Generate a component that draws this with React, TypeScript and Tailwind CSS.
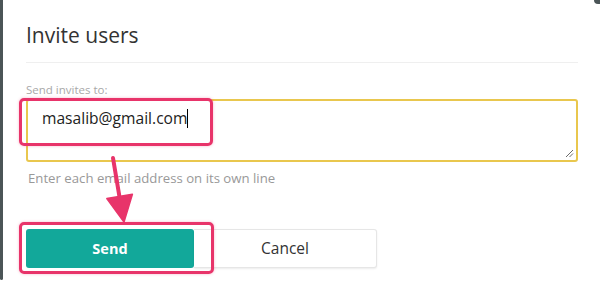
import React from "react";

const FONT = { fontFamily: '"Open Sans", "Noto Sans", Arial, sans-serif' };

function Grip() {
  return (
    <svg width="9" height="9" viewBox="0 0 9 9" className="absolute right-[2px] bottom-[2px]">
      <path d="M1 8 L8 1 M4.5 8 L8 4.5" stroke="#6b6b6b" strokeWidth="1" />
    </svg>
  );
}

export default function App() {
  return (
    <div className="relative w-[600px] h-[290px] bg-white overflow-hidden flex" style={FONT}>
      {/* backdrop edge */}
      <div className="w-[3px] h-[280px] bg-[#4b5557] rounded-b-sm shrink-0" />

      {/* dialog */}
      <div className="flex-1 bg-white rounded-tl-[7px] rounded-tr-[5px] pl-[23px] pr-[22px] pt-[21px]">
        <h1 className="text-[21px] leading-[29px] text-[#333] font-normal">Invite users</h1>
        <div className="mt-[12px] border-t border-[#efefef]" />

        <p className="mt-[19px] text-[11.5px] leading-[15px] text-[#a8a8a8]">Send invites to:</p>
        <div className="relative mt-[2px] h-[63px] border-2 border-[#e9c74e] rounded-[3px] pl-[14px] pt-[5px]">
          <span className="text-[15.6px] leading-[21px] text-[#222]">masalib@gmail.com</span>
          <span className="inline-block align-middle w-px h-[19px] bg-black -mt-[3px]" />
          <Grip />
        </div>

        <p className="mt-[8px] ml-[2px] text-[13.2px] leading-[17px] text-[#999]">
          Enter each email address on its own line
        </p>

        <div className="mt-[42px] flex">
          <button className="w-[168px] h-[39px] rounded-[3px] bg-[#12a89a] text-white text-[14.5px] font-bold">
            Send
          </button>
          <button className="w-[183px] h-[39px] rounded-r-[3px] bg-white border border-[#e6e6e6] border-l-0 shadow-[0_1px_2px_rgba(0,0,0,0.08)] text-[15.5px] text-[#333]">
            Cancel
          </button>
        </div>
      </div>

      {/* top-right backdrop corner */}
      <div className="absolute right-0 top-0 w-[6px] h-[4px] bg-[#4b5557] rounded-bl-[4px]" />

      {/* annotations */}
      <div className="absolute left-[19px] top-[98px] w-[194px] h-[48px] rounded-[5px] border-[3px] border-[#e8346a] shadow-[0_0_3px_rgba(232,52,106,0.35)]" />
      <div className="absolute left-[19px] top-[222px] w-[195px] h-[52px] rounded-[5px] border-[3px] border-[#e8346a] shadow-[0_0_3px_rgba(232,52,106,0.35)]" />
      <svg className="absolute left-0 top-0" width="600" height="290" viewBox="0 0 600 290">
        <line x1="113" y1="158" x2="120" y2="200" stroke="#e8346a" strokeWidth="4" strokeLinecap="round" />
        <polygon points="106.8,198.6 132.4,194.2 124,222" fill="#e8346a" stroke="#e8346a" strokeWidth="1.5" strokeLinejoin="round" />
      </svg>
    </div>
  );
}
